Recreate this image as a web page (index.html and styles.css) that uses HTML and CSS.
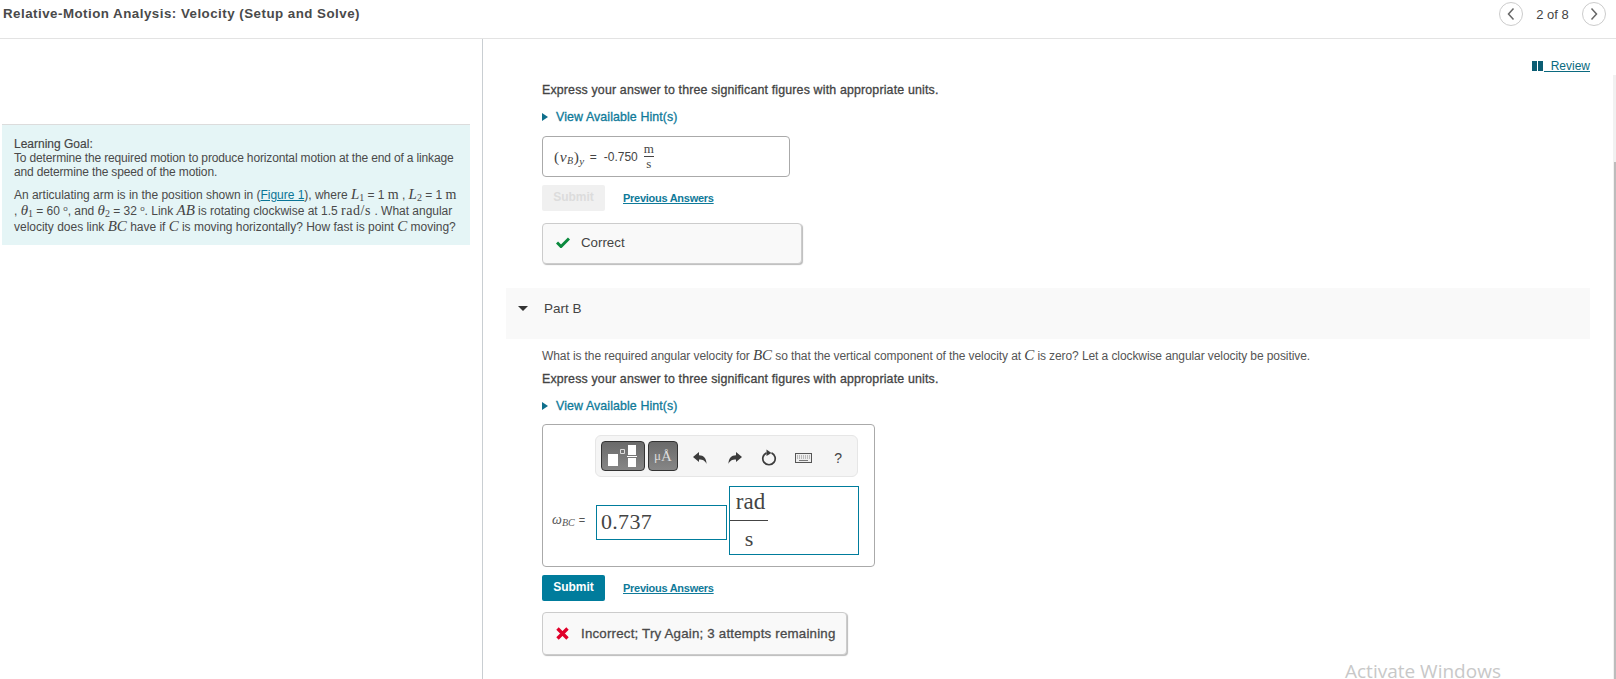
FILE: index.html
```html
<!DOCTYPE html>
<html lang="en">
<head>
<meta charset="utf-8">
<title>Relative-Motion Analysis: Velocity (Setup and Solve)</title>
<link rel="stylesheet" href="styles.css">
</head>
<body>
<div class="page">
  <header class="topbar">
    <h1 class="title">Relative-Motion Analysis: Velocity (Setup and Solve)</h1>
    <nav class="pager">
      <span class="circle"><svg width="10" height="14" viewBox="0 0 10 14"><path d="M7.5 1.5 2.5 7l5 5.5" fill="none" stroke="#666" stroke-width="1.5"/></svg></span>
      <span class="count">2 of 8</span>
      <span class="circle"><svg width="10" height="14" viewBox="0 0 10 14"><path d="M2.5 1.5 7.5 7l-5 5.5" fill="none" stroke="#666" stroke-width="1.5"/></svg></span>
    </nav>
  </header>
  <div class="columns">
    <aside class="left">
      <section class="goal">
        <p class="goal-p"><span class="goal-h">Learning Goal:</span><br>To determine the required motion to produce horizontal motion at the end of a linkage<br>and determine the speed of the motion.</p>
        <p class="goal-p goal-second">An articulating arm is in the position shown in (<a class="figlink" href="#">Figure 1</a>), where <i class="mi">L</i><sub class="ms">1</sub> = 1 <span class="mr">m</span> , <i class="mi">L</i><sub class="ms">2</sub> = 1 <span class="mr">m</span><br>, <i class="mi">θ</i><sub class="ms">1</sub> = 60 <sup class="deg">o</sup>, and <i class="mi">θ</i><sub class="ms">2</sub> = 32 <sup class="deg">o</sup>. Link <i class="mi">AB</i> is rotating clockwise at 1.5 <span class="mr mr-wide">rad/s</span> . What angular<br>velocity does link <i class="mi">BC</i> have if <i class="mi">C</i> is moving horizontally? How fast is point <i class="mi">C</i> moving?</p>
      </section>
    </aside>
    <main class="right">
      <div class="review-row">
        <a class="review" href="#"><svg class="book" width="11" height="10" viewBox="0 0 11 10"><path d="M0 0h5v10H0zM6 0h5v10H6z" fill="#0b5d73"/></svg>&nbsp;&nbsp;Review</a>
      </div>
      <div class="part">
        <p class="instr">Express your answer to three significant figures with appropriate units.</p>
        <a class="hint" href="#"><span class="tri-right"></span>View Available Hint(s)</a>
        <div class="answer">
          <span class="sym"><span class="paren">(</span><i>v<sub class="sub-i">B</sub></i><span class="paren">)</span><i class="sub-y">y</i></span>
          <span class="eq">=</span>
          <span class="val">-0.750</span>
          <span class="frac-s"><span class="frac-t">m</span><span class="frac-b">s</span></span>
        </div>
        <div class="actions">
          <button class="btn btn-off" type="button">Submit</button>
          <a class="prev" href="#">Previous Answers</a>
        </div>
        <div class="feedback fb-ok">
          <svg width="14" height="11" viewBox="0 0 14 11"><path d="M1 5.5 5 9.5 13 1.5" fill="none" stroke="#0b8a3e" stroke-width="3"/></svg>
          <span class="fb-text">Correct</span>
        </div>
      </div>
      <div class="partbar"><span class="tri-down"></span><span class="partname">Part B</span></div>
      <div class="part">
        <p class="question">What is the required angular velocity for <i class="mi">BC</i> so that the vertical component of the velocity at <i class="mi">C</i> is zero? Let a clockwise angular velocity be positive.</p>
        <p class="instr instr-b">Express your answer to three significant figures with appropriate units.</p>
        <a class="hint" href="#"><span class="tri-right"></span>View Available Hint(s)</a>
        <div class="editor">
          <div class="toolbar">
            <span class="tool tool-wide">
              <svg width="34" height="26" viewBox="0 0 34 26"><path d="M2 11h10v12H2z" fill="#fff"/><path d="M14.500 6.500h4v4h-4z" fill="none" stroke="#ddd"/><path d="M22 2h8v10h-8zM22 15h8v9h-8z" fill="#fff"/><path d="M21 13.500h10" stroke="#fff"/></svg>
            </span>
            <span class="tool tool-mu"><span class="mu">μ</span><span class="ang">Å</span></span>
            <span class="icons">
              <svg width="14" height="14" viewBox="0 0 14 14"><path d="M0 6 6 1v3.200c4.600 0 7.500 3 7.500 8.800-1.300-3.300-3.500-4.500-7.500-4.500V11z" fill="#3c3c3c"/></svg>
              <svg width="14" height="14" viewBox="0 0 14 14"><path d="M14 6 8 1v3.200C3.400 4.200.5 7.200.5 13c1.300-3.300 3.500-4.500 7.500-4.500V11z" fill="#3c3c3c"/></svg>
              <svg width="16" height="17" viewBox="0 0 16 17"><path d="M10.500 3.900a6.200 6.200 0 1 1-5 0" fill="none" stroke="#3c3c3c" stroke-width="1.700"/><path d="M5.500 .5 10.500 4 5.500 7z" fill="#3c3c3c"/></svg>
              <svg width="17" height="10" viewBox="0 0 17 10"><rect x=".5" y=".5" width="16" height="9" fill="#eee" stroke="#555"/><path d="M2 3h13M2 5h13" stroke="#888" stroke-dasharray="1 1"/><path d="M4 7.500h9" stroke="#777"/></svg>
              <span class="qm">?</span>
            </span>
          </div>
          <div class="mathrow">
            <span class="omega"><i>ω<sub class="sub-i">BC</sub></i><span class="omega-eq">=</span></span>
            <span class="input input-val">0.737</span>
            <span class="input input-unit">
              <span class="unit-frac"><span class="unit-t">rad</span><span class="unit-b">s</span></span>
            </span>
          </div>
        </div>
        <div class="actions actions-b">
          <button class="btn btn-on" type="button">Submit</button>
          <a class="prev" href="#">Previous Answers</a>
        </div>
        <div class="feedback fb-bad">
          <svg width="13" height="13" viewBox="0 0 13 13"><path d="M1.500 1.500 11.500 11.500M11.500 1.500 1.500 11.500" stroke="#e0002a" stroke-width="3.400"/></svg>
          <span class="fb-text fb-text-bad">Incorrect; Try Again; 3 attempts remaining</span>
        </div>
      </div>
    </main>
  </div>
  <div class="scrolltrack"><div class="scrollthumb"></div></div>
  <div class="activate">Activate Windows</div>
</div>
</body>
</html>
```
FILE: styles.css
```css
* { box-sizing: border-box; }
html, body { margin: 0; padding: 0; background: #fff; }
body { font-family: "Liberation Sans", Arial, sans-serif; color: #444; font-size: 12px; }
.page { position: relative; width: 1616px; height: 679px; overflow: hidden; display: flex; flex-direction: column; }
a { text-decoration: none; }
p { margin: 0; }

.topbar { height: 39px; flex: none; display: flex; align-items: flex-start; justify-content: space-between; border-bottom: 1px solid #e3e3e3; padding: 2px 10px 0 3px; }
.title { margin: 1px 0 0; font-size: 13.330px; line-height: 22px; font-weight: bold; color: #4a4a4a; letter-spacing: .48px; }
.pager { display: flex; align-items: center; }
.circle { width: 24px; height: 24px; border: 1px solid #ccc; border-radius: 50%; display: flex; align-items: center; justify-content: center; }
.count { width: 59px; text-align: center; font-size: 13px; color: #444; }

.columns { flex: 1; display: flex; min-height: 0; }
.left { width: 483px; flex: none; border-right: 1px solid #c9ced2; padding: 85px 12px 0 2px; }
.goal { background: #e5f5f6; border-top: 1px solid #dcdcdc; padding: 12px 12px 10px 12px; height: 121px; line-height: 14px; color: #4a4a4a; }
.goal-p { font-size: 12px; letter-spacing: -.15px; white-space: nowrap; }
.goal-h { color: #444; letter-spacing: 0; -webkit-text-stroke: .15px #444; }
.goal-second { margin-top: 8px; line-height: 15px; letter-spacing: -.02px; }
.figlink { color: #0a7596; text-decoration: underline; }
.mi { font-family: "Liberation Serif", serif; font-size: 15px; font-style: italic; color: #444; }
.mr { font-family: "Liberation Serif", serif; font-size: 14px; color: #444; }
.mr-wide { letter-spacing: .6px; }
.ms { font-family: "Liberation Serif", serif; font-size: 10px; line-height: 0; vertical-align: -2px; }
.deg { font-size: 8px; line-height: 0; vertical-align: 4px; }

.right { flex: 1; padding: 0 26px 0 23px; min-width: 0; }
.review-row { display: flex; justify-content: flex-end; height: 36px; padding-top: 18px; }
.review { color: #0b6a80; text-decoration: underline; font-size: 12px; line-height: 14px; display: flex; align-items: center; height: 18px; align-self: flex-start; }
.book { margin-right: 1px; }
.part { padding-left: 36px; }
.instr { font-size: 12.400px; line-height: 14px; color: #444; margin-top: 8px; -webkit-text-stroke: .3px #444; letter-spacing: .16px; white-space: nowrap; }
.instr-b { margin-top: 8px; }
.hint { display: flex; align-items: center; margin-top: 13px; height: 14px; font-size: 12.400px; color: #0f7a99; -webkit-text-stroke: .3px #0f7a99; letter-spacing: .1px; }
.tri-right { width: 0; height: 0; border-left: 6px solid #0f6f8c; border-top: 4.500px solid transparent; border-bottom: 4.500px solid transparent; margin-right: 8px; }
.answer { width: 248px; height: 41px; margin-top: 12px; border: 1px solid #aaa; border-radius: 4px; display: flex; align-items: center; padding-left: 11px; color: #444; }
.sym { font-family: "Liberation Serif", serif; font-size: 15.500px; letter-spacing: .5px; }
.paren { font-size: 15.500px; }
.sub-i { font-size: 10px; line-height: 0; vertical-align: -2px; }
.sub-y { font-size: 11px; vertical-align: -3px; line-height: 0; }
.eq { margin-left: 5px; font-size: 12px; }
.val { margin-left: 7px; font-size: 12px; }
.frac-s { margin-left: 6px; display: inline-flex; flex-direction: column; align-items: center; font-family: "Liberation Serif", serif; font-size: 13px; line-height: 12px; }
.frac-t { border-bottom: 1px solid #444; padding: 0 0 1px; }
.frac-b { padding-top: 1px; }
.actions { display: flex; align-items: center; margin-top: 8px; height: 26px; }
.btn { width: 63px; height: 26px; border: 0; border-radius: 2px; padding: 0 0 3px; font-family: "Liberation Sans", Arial, sans-serif; font-size: 12px; font-weight: bold; }
.btn-off { background: #f0f0f0; color: #dcdcdc; }
.btn-on { background: #007c9c; color: #fff; }
.prev { margin-left: 18px; color: #0f7a99; font-size: 11px; font-weight: bold; letter-spacing: -.27px; text-decoration: underline; }
.feedback { margin-top: 12px; display: flex; align-items: center; border: 1px solid #ccc; border-radius: 4px; background: #f9f9f9; box-shadow: 1px 1px 1px #bbb; padding-left: 13px; }
.fb-ok { width: 260px; height: 41px; padding-bottom: 2px; }
.fb-bad { width: 305px; height: 43px; margin-top: 11px; padding-bottom: 1px; }
.fb-text { margin-left: 11px; font-size: 13.300px; color: #444; }
.fb-text-bad { margin-left: 12px; font-size: 13.300px; color: #4a4a4a; -webkit-text-stroke: .3px #4a4a4a; letter-spacing: .2px; }

.partbar { margin-top: 24px; height: 51px; background: #f9f9f9; display: flex; align-items: center; padding-left: 12px; padding-bottom: 10px; }
.tri-down { width: 0; height: 0; border-top: 5px solid #333; border-left: 5px solid transparent; border-right: 5px solid transparent; }
.partname { margin-left: 16px; font-size: 13.500px; color: #444; }
.question { margin-top: 8px; font-size: 12px; line-height: 16px; color: #555; letter-spacing: -.09px; white-space: nowrap; }
.editor { margin-top: 11px; width: 333px; height: 143px; border: 1px solid #aaa; border-radius: 4px; padding: 10px 0 0 52px; }
.toolbar { width: 263px; height: 42px; background: #f5f5f5; border: 1px solid #e6e6e6; border-radius: 6px; display: flex; align-items: center; padding-left: 5px; }
.tool { height: 30px; border: 1px solid #333; border-radius: 4px; background: linear-gradient(#6a6a6a, #868686); display: flex; align-items: center; justify-content: center; }
.tool-wide { width: 44px; }
.tool-mu { width: 30px; margin-left: 3px; color: #ddd; font-family: "Liberation Serif", serif; }
.mu { font-size: 13px; }
.ang { font-size: 15px; }
.icons { display: grid; grid-template-columns: repeat(5, 34.500px); justify-items: center; align-items: center; margin: 3px 0 0 5px; }
.qm { font-size: 14px; color: #444; }
.mathrow { display: flex; align-items: center; margin: 9px 0 0 -43px; }
.omega { width: 44px; margin-bottom: 2px; font-family: "Liberation Serif", serif; font-size: 14px; color: #555; white-space: nowrap; }
.omega-eq { font-family: "Liberation Sans", Arial, sans-serif; font-size: 11px; margin-left: 4px; }
.input { border: 1px solid #007c9c; display: block; font-family: "Liberation Serif", serif; font-size: 22px; color: #444; }
.input-val { width: 131px; height: 35px; line-height: 32px; padding-left: 4px; letter-spacing: .3px; margin-top: 3px; }
.input-unit { width: 130px; height: 69px; margin-left: 2px; }
.unit-frac { display: inline-flex; flex-direction: column; align-items: center; width: 38px; }
.unit-t { width: 100%; text-align: center; border-bottom: 1px solid #444; height: 34px; line-height: 30px; font-size: 23px; padding-left: 3px; }
.unit-b { line-height: 36px; }

.scrolltrack { position: absolute; right: 0; top: 75px; bottom: 0; width: 3px; background: #f1f1f1; }
.scrollthumb { position: absolute; right: 0; top: 87px; bottom: 0; width: 2px; background: #bcbcbc; }
.activate { position: absolute; left: 1345px; top: 659px; font-family: "Open Sans", sans-serif; font-size: 19px; line-height: 24px; color: #c8c8c8; }
```
